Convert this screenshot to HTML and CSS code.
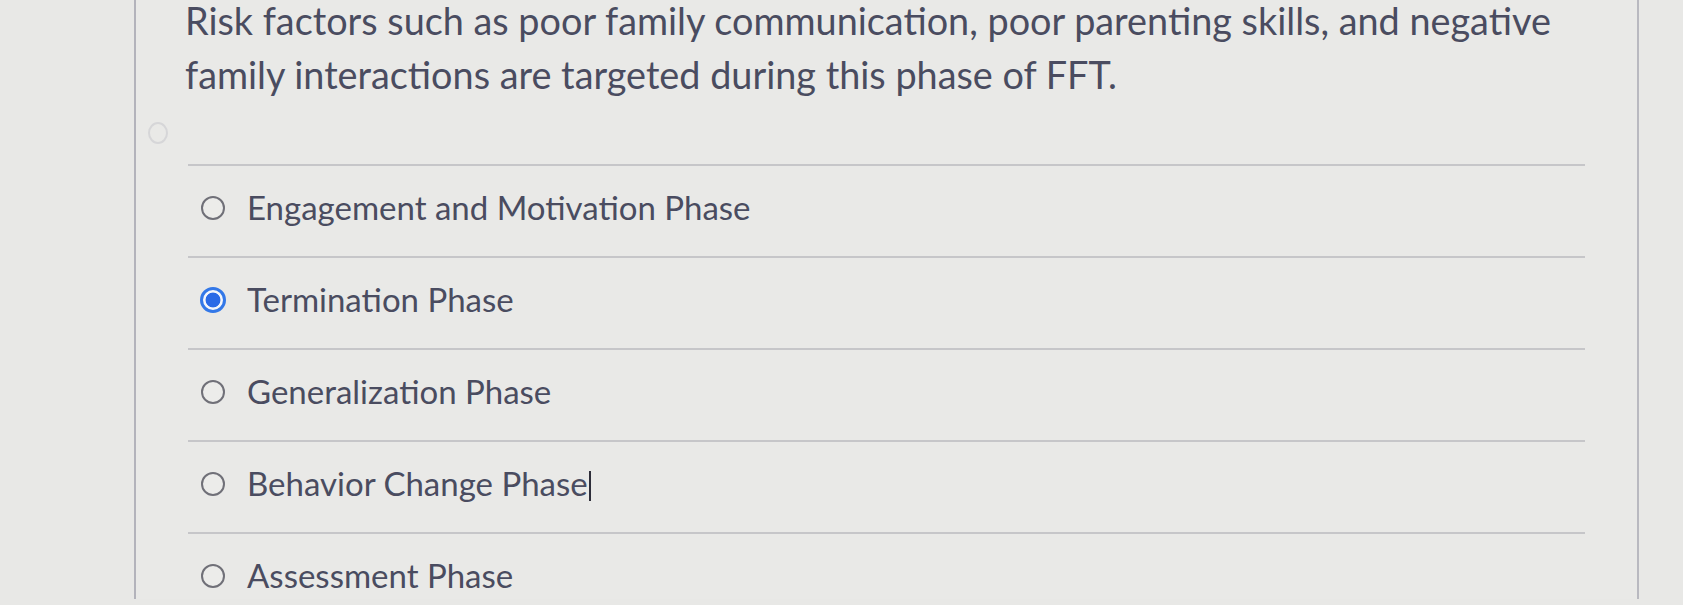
FILE: index.html
```html
<!DOCTYPE html>
<html lang="en">
<head>
<meta charset="utf-8">
<title>Quiz question</title>
<link rel="stylesheet" href="styles.css">
</head>
<body>
<div class="page">
  <div class="panel">
    <p class="question">Risk factors such as poor family communication, poor parenting skills, and negative family interactions are targeted during this phase of FFT.</p>
    <span class="ghost"></span>
    <ul class="options">
      <li class="option"><span class="radio"></span><span class="label">Engagement and Motivation Phase</span></li>
      <li class="option"><span class="radio checked"></span><span class="label">Termination Phase</span></li>
      <li class="option"><span class="radio"></span><span class="label">Generalization Phase</span></li>
      <li class="option"><span class="radio"></span><span class="label">Behavior Change Phase<span class="caret"></span></span></li>
      <li class="option"><span class="radio"></span><span class="label">Assessment Phase</span></li>
    </ul>
  </div>
</div>
</body>
</html>
```

FILE: styles.css
```css
html, body {
  margin: 0;
  padding: 0;
  background: #e8e8e6;
  height: 605px;
  overflow: hidden;
}
.page {
  height: 605px;
  padding-left: 134px;
  font-family: Lato, "Noto Sans", sans-serif;
  color: #4a4c60;
}
.panel {
  position: relative;
  width: 1505px;
  height: 605px;
  border-left: 2px solid #b3b3bb;
  border-right: 2px solid #b9b9c0;
  background: #e9e9e7;
  box-sizing: border-box;
  padding-left: 49px;
}
.question {
  margin: -6px 0 0;
  font-size: 37.8px;
  line-height: 54px;
  width: 1420px;
}
.ghost {
  position: absolute;
  left: 12px;
  top: 128px;
  width: 16px;
  height: 18px;
  border: 2px solid #d6d6d8;
  border-radius: 50%;
}
.options {
  list-style: none;
  margin: 62px 0 0 3px;
  padding: 0;
  width: 1397px;
}
.option {
  border-top: 2px solid #c6c6c9;
  height: 90px;
  display: flex;
  align-items: flex-start;
}
.radio {
  flex: none;
  width: 24px;
  height: 24px;
  border: 2px solid #707078;
  border-radius: 50%;
  margin: 30px 0 0 13px;
  box-sizing: border-box;
  background: #ececea;
}
.radio.checked {
  width: 26px;
  height: 26px;
  margin: 29px 0 0 12px;
  border: 3px solid #3378e8;
  background: radial-gradient(circle, #2a6ae6 0 7px, #f4f6fb 7.8px);
}
.label {
  font-size: 33px;
  line-height: 44px;
  margin: 19px 0 0 22px;
  white-space: nowrap;
}
.radio.checked + .label {
  margin-left: 21px;
}
.caret {
  display: inline-block;
  width: 2px;
  height: 30px;
  background: #2e2e3a;
  vertical-align: -5px;
  margin-left: 1px;
}
```
